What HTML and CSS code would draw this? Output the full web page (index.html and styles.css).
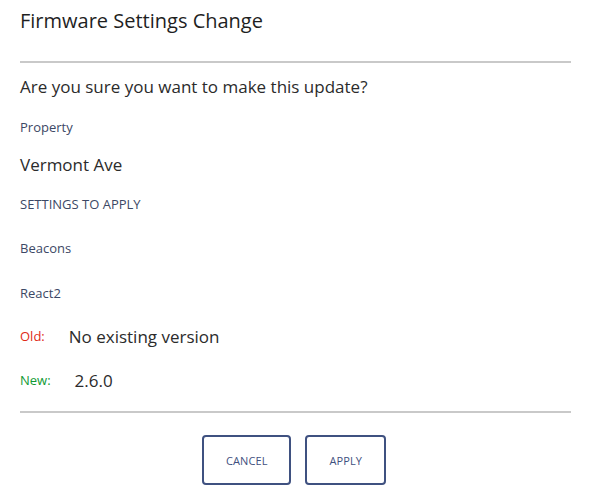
FILE: index.html
```html
<!DOCTYPE html>
<html lang="en">
<head>
    <meta charset="UTF-8">
    <title>Firmware Settings Change</title>
    <link rel="stylesheet" href="styles.css">
</head>
<body>
    <section class="modal">
        <h1 class="modal-title">Firmware Settings Change</h1>
        <div class="divider"></div>
        <p class="question">Are you sure you want to make this update?</p>
        <div class="label label-property">Property</div>
        <div class="value value-property">Vermont Ave</div>
        <div class="label label-settings">SETTINGS TO APPLY</div>
        <div class="label label-group">Beacons</div>
        <div class="label label-device">React2</div>
        <div class="version-row version-old">
            <span class="version-label old">Old:</span>
            <span class="version-value">No existing version</span>
        </div>
        <div class="version-row version-new">
            <span class="version-label new">New:</span>
            <span class="version-value">2.6.0</span>
        </div>
        <div class="divider divider-bottom"></div>
        <div class="actions">
            <button class="btn btn-cancel" type="button">CANCEL</button>
            <button class="btn btn-apply" type="button">APPLY</button>
        </div>
    </section>
</body>
</html>
```

FILE: styles.css
```css
* {
    box-sizing: border-box;
}
body {
    margin: 0;
    background: #ffffff;
    font-family: "Open Sans", "DejaVu Sans", sans-serif;
    color: #333333;
}
.modal {
    width: 571px;
    padding: 0 0 0 20px;
}
.modal-title {
    margin: 9px 0 0;
    font-size: 20px;
    line-height: 24px;
    font-weight: 500;
    color: #1f1f1f;
}
.divider {
    height: 2px;
    background: #c9c9c9;
    margin-top: 28px;
}
.question {
    margin: 12px 0 0;
    font-size: 17px;
    line-height: 24px;
    color: #2b2b2b;
}
.label {
    font-size: 13px;
    line-height: 16px;
    font-weight: 400;
    color: #3c4865;
}
.label-property { margin-top: 20px; }
.value {
    font-size: 17px;
    line-height: 24px;
    color: #2b2b2b;
}
.value-property { margin-top: 18px; }
.label-settings { margin-top: 19px; }
.label-group { margin-top: 28px; }
.label-device { margin-top: 29px; }

.version-row {
    display: flex;
    align-items: center;
    height: 24px;
}
.version-old { margin-top: 23px; }
.version-new { margin-top: 20px; }
.version-label {
    font-size: 13px;
}
.version-label.old {
    color: #e02a17;
    margin-right: 24px;
}
.version-label.new {
    color: #119a34;
    margin-right: 24px;
}
.version-value {
    font-size: 17px;
    color: #2b2b2b;
}
.divider-bottom { margin-top: 19px; }

.actions {
    display: flex;
    justify-content: center;
    gap: 14px;
    margin-top: 22px;
    padding-right: 3px;
}
.btn {
    height: 50px;
    padding: 0 22px;
    border: 2px solid #3f5180;
    border-radius: 4px;
    background: #ffffff;
    color: #3f5180;
    font-family: inherit;
    font-size: 11px;
    font-weight: 500;
    letter-spacing: 0.1px;
}
```
